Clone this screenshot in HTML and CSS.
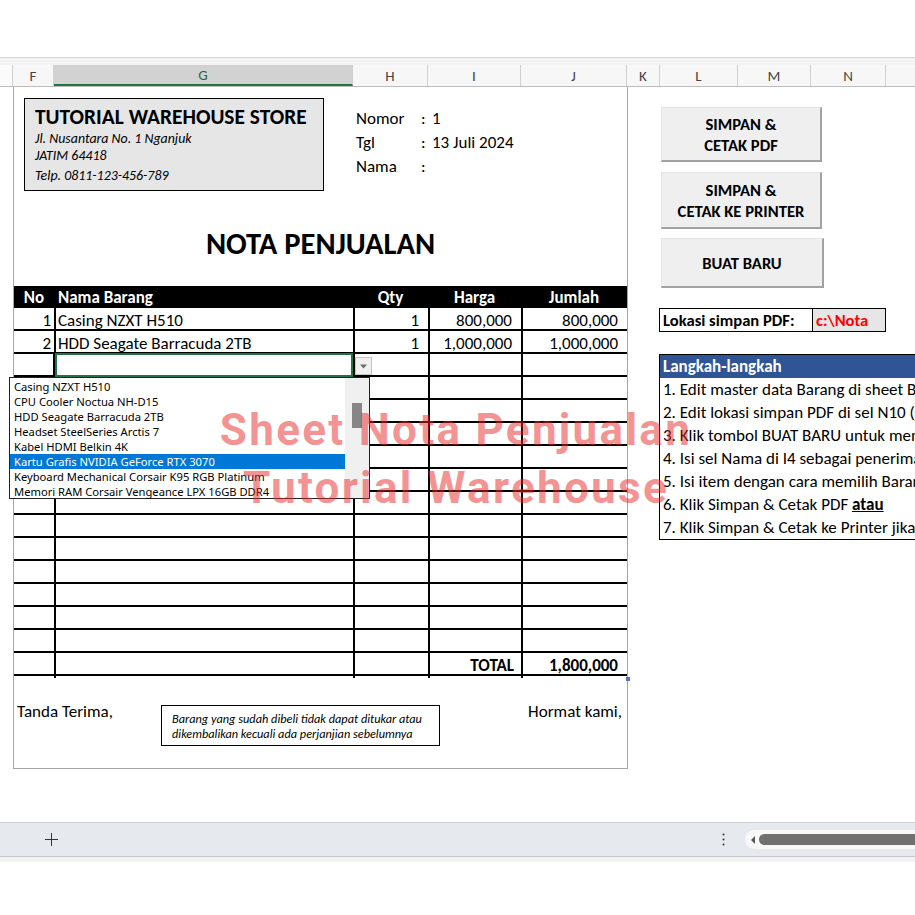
FILE: index.html
```html
<!DOCTYPE html>
<html lang="id">
<head>
<meta charset="utf-8">
<title>Nota Penjualan</title>
<link rel="stylesheet" href="styles.css">
</head>
<body>
<div class="app">
  <div class="topgap"></div>
  <div class="colhead">
    <div class="ch w-gut"></div>
    <div class="ch w-f">F</div>
    <div class="ch w-g sel">G</div>
    <div class="ch w-h">H</div>
    <div class="ch w-i">I</div>
    <div class="ch w-j">J</div>
    <div class="ch w-k">K</div>
    <div class="ch w-l">L</div>
    <div class="ch w-m">M</div>
    <div class="ch w-n">N</div>
    <div class="ch w-o"></div>
  </div>

  <div class="sheet">
    <div class="gutter"></div>
    <div class="invoice">
      <div class="head">
        <div class="store">
          <div class="store-name">TUTORIAL WAREHOUSE STORE</div>
          <div class="store-line">Jl. Nusantara No. 1 Nganjuk</div>
          <div class="store-line">JATIM 64418</div>
          <div class="store-line telp">Telp. 0811-123-456-789</div>
        </div>
        <div class="meta">
          <div>Nomor</div><div>:</div><div>1</div>
          <div>Tgl</div><div>:</div><div>13 Juli 2024</div>
          <div>Nama</div><div>:</div><div></div>
        </div>
      </div>
      <div class="title">NOTA PENJUALAN</div>
      <div class="tbl">
        <div class="tr th"><div>No</div><div class="left">Nama Barang</div><div>Qty</div><div>Harga</div><div>Jumlah</div></div>
        <div class="tr"><div>1</div><div>Casing NZXT H510</div><div class="num">1</div><div class="num">800,000</div><div class="num">800,000</div></div>
        <div class="tr"><div>2</div><div>HDD Seagate Barracuda 2TB</div><div class="num">1</div><div class="num">1,000,000</div><div class="num">1,000,000</div></div>
        <div class="tr"><div></div><div class="active"><span class="ddbtn"><svg width="9" height="5" viewBox="0 0 9 5"><path d="M1 0.5h7l-3.5 4z" fill="#6b6b6b"/></svg></span></div><div></div><div></div><div></div></div>
        <div class="tr"><div></div><div></div><div></div><div></div><div></div></div>
        <div class="tr"><div></div><div></div><div></div><div></div><div></div></div>
        <div class="tr"><div></div><div></div><div></div><div></div><div></div></div>
        <div class="tr"><div></div><div></div><div></div><div></div><div></div></div>
        <div class="tr"><div></div><div></div><div></div><div></div><div></div></div>
        <div class="tr"><div></div><div></div><div></div><div></div><div></div></div>
        <div class="tr"><div></div><div></div><div></div><div></div><div></div></div>
        <div class="tr"><div></div><div></div><div></div><div></div><div></div></div>
        <div class="tr"><div></div><div></div><div></div><div></div><div></div></div>
        <div class="tr"><div></div><div></div><div></div><div></div><div></div></div>
        <div class="tr"><div></div><div></div><div></div><div></div><div></div></div>
        <div class="tr"><div></div><div></div><div></div><div></div><div></div></div>
        <div class="tr total"><div></div><div></div><div></div><div class="num tot-l">TOTAL</div><div class="num">1,800,000<span class="handle"></span></div></div>
      </div>
      <div class="foot">
        <div class="tanda">Tanda Terima,</div>
        <div class="note">Barang yang sudah dibeli tidak dapat ditukar atau<br>dikembalikan kecuali ada perjanjian sebelumnya</div>
        <div class="hormat">Hormat kami,</div>
      </div>
    </div>

    <div class="panel">
      <div class="btn b1">SIMPAN &amp;<br>CETAK PDF</div>
      <div class="btn b2">SIMPAN &amp;<br>CETAK KE PRINTER</div>
      <div class="btn b3">BUAT BARU</div>
      <div class="lokasi"><div class="lok-label">Lokasi simpan PDF:</div><div class="lok-val">c:\Nota</div></div>
      <div class="steps">
        <div class="steps-head">Langkah-langkah</div>
        <div class="step">1. Edit master data Barang di sheet Barang</div>
        <div class="step">2. Edit lokasi simpan PDF di sel N10 (jika perlu)</div>
        <div class="step">3. Klik tombol BUAT BARU untuk membuat nota baru</div>
        <div class="step">4. Isi sel Nama di I4 sebagai penerima nota</div>
        <div class="step">5. Isi item dengan cara memilih Barang dari daftar</div>
        <div class="step">6. Klik Simpan &amp; Cetak PDF <b class="u">atau</b></div>
        <div class="step">7. Klik Simpan &amp; Cetak ke Printer jika ingin mencetak</div>
      </div>
    </div>
  </div>

  <div class="tabbar">
    <svg class="plus" width="13" height="13" viewBox="0 0 13 13"><path d="M6.5 0v13M0 6.5h13" stroke="#333" stroke-width="1"/></svg>
    <svg class="dots" width="3" height="13" viewBox="0 0 3 13"><circle cx="1.5" cy="1.5" r="1" fill="#333"/><circle cx="1.5" cy="6.5" r="1" fill="#333"/><circle cx="1.5" cy="11.5" r="1" fill="#333"/></svg>
    <div class="track"><span class="arrow"></span><span class="thumb"></span></div>
  </div>
  <div class="under"></div>

  <div class="dd">
    <div class="dd-items">
      <div class="dd-item">Casing NZXT H510</div>
      <div class="dd-item">CPU Cooler Noctua NH-D15</div>
      <div class="dd-item">HDD Seagate Barracuda 2TB</div>
      <div class="dd-item">Headset SteelSeries Arctis 7</div>
      <div class="dd-item">Kabel HDMI Belkin 4K</div>
      <div class="dd-item on">Kartu Grafis NVIDIA GeForce RTX 3070</div>
      <div class="dd-item">Keyboard Mechanical Corsair K95 RGB Platinum</div>
      <div class="dd-item">Memori RAM Corsair Vengeance LPX 16GB DDR4</div>
    </div>
    <div class="dd-scroll"><span class="dd-thumb"></span></div>
  </div>

  <div class="wm">Sheet Nota Penjualan<br>Tutorial Warehouse</div>
</div>
</body>
</html>
```

FILE: styles.css
```css
* { box-sizing: border-box; }
html, body { margin: 0; padding: 0; }
body {
  width: 915px; height: 915px; overflow: hidden; background: #fff; color: #000;
  font-family: Carlito, Calibri, Lato, "Noto Sans", sans-serif;
}
.app { position: relative; width: 915px; height: 915px; overflow: hidden; }
.topgap { height: 57px; }

/* column headers */
.colhead {
  height: 30px; display: flex; padding-top: 7px;
  background: #f3f3f3; border-top: 1px solid #d6d6d6; border-bottom: 1px solid #bdbdbd;
}
.ch {
  height: 21px; border-right: 1px solid #d0d0d0; background: #f7f7f7;
  display: flex; align-items: center; justify-content: center;
  font-size: 15px; color: #444; flex: none;
}
.w-gut { width: 13px; background: #fbfbfb; }
.w-f { width: 41px; }
.w-g { width: 299px; }
.w-h { width: 75px; }
.w-i { width: 93px; }
.w-j { width: 106px; }
.w-k { width: 33px; }
.w-l { width: 78px; }
.w-m { width: 73px; }
.w-n { width: 75px; }
.w-o { flex: 1; border-right: none; }
.ch.sel { background: #d2d2d2; color: #1e6b40; border-bottom: 2px solid #217346; }

/* sheet */
.sheet { display: flex; height: 735px; }
.gutter { width: 13px; flex: none; }
.invoice {
  width: 615px; height: 682px; flex: none; position: relative;
  border-left: 1px solid #a6a6a6; border-right: 1px solid #a6a6a6; border-bottom: 1px solid #a6a6a6;
}
.head { display: flex; height: 104px; padding: 11px 0 0 10px; }
.store {
  width: 300px; height: 93px; background: #e7e6e6; border: 1px solid #000;
  padding: 5px 0 0 10px; flex: none;
}
.store-name { font-weight: 700; font-size: 21.4px; line-height: 26px; }
.store-line { font-style: italic; font-size: 13.9px; line-height: 17px; }
.store-line.telp { margin-top: 3px; }
.meta {
  margin: 9px 0 0 32px; display: grid; grid-template-columns: 65px 11px auto;
  font-size: 17px; line-height: 24px; align-content: start;
}
.title { height: 95px; padding-top: 35px; text-align: center; font-weight: 700; font-size: 30.6px; line-height: 36px; }

/* table */
.tr {
  display: grid; grid-template-columns: 40px 299px 75px 93px 106px;
  height: 23px; border-bottom: 2px solid #000; font-size: 17px; line-height: 25px;
}
.tr > div { border-left: 2px solid #000; padding: 0 9px 0 2px; white-space: nowrap; }
.tr > div:first-child { border-left: none; text-align: right; padding-right: 3px; }
.tr > .num { text-align: right; }
.tr > .tot-l { padding-right: 7px; }
.total { font-weight: 700; }
.th { height: 22px; background: #000; color: #fff; font-weight: 700; border-bottom: none; line-height: 24px; }
.th > div, .th > div:first-child { border-left: none; text-align: center; padding: 0; }
.th > .left { text-align: left; padding-left: 4px; }
.tr > .active { position: relative; box-shadow: inset 0 0 0 2px #217346; margin: -1px 0 -2px -1px; }
.ddbtn {
  position: absolute; right: -19px; top: 4px; width: 17px; height: 18px;
  background: #f0f0f0; border: 1px solid #c6c6c6;
  display: flex; align-items: center; justify-content: center;
}
.tr > div:last-child { position: relative; }
.handle { position: absolute; right: -3px; bottom: -3px; width: 4px; height: 4px; background: #5b73b8; }

/* footer */
.foot { display: flex; align-items: flex-start; padding: 26px 5px 0 3px; font-size: 17px; line-height: 20px; }
.tanda { width: 144px; flex: none; }
.note {
  margin-top: 3px; width: 279px; height: 41px; border: 1px solid #000; flex: none;
  font-style: italic; font-size: 12.3px; line-height: 15px; padding: 5px 0 0 10px;
}
.hormat { margin-left: auto; }

/* right panel */
.panel { flex: 1; overflow: hidden; padding: 20px 0 0 31px; }
.btn {
  margin-left: 2px; width: 161px; background: #efefef;
  border-top: 1px solid #e4e4e4; border-left: 1px solid #e4e4e4;
  border-right: 2px solid #a2a2a2; border-bottom: 2px solid #a2a2a2;
  display: flex; align-items: center; justify-content: center; text-align: center;
  font-weight: 700; font-size: 16.6px; line-height: 21px; padding-top: 2px;
}
.b1 { height: 55px; }
.b2 { height: 57px; margin-top: 10px; }
.b3 { height: 50px; margin-top: 9px; width: 163px; }
.lokasi { margin-top: 20px; display: flex; width: 227px; height: 24px; border: 1px solid #000; font-weight: 700; font-size: 16.6px; line-height: 22px; }
.lok-label { width: 153px; border-right: 1px solid #000; padding-left: 3px; background: #fff; }
.lok-val { flex: 1; background: #e7e6e6; color: #f00; padding-left: 3px; }
.steps { margin-top: 22px; width: 420px; border: 1px solid #000; font-size: 17px; }
.steps-head { height: 23px; background: #2f5597; color: #fff; font-weight: 700; line-height: 23px; padding-left: 3px; }
.step { height: 23px; line-height: 23px; padding-left: 3px; white-space: nowrap; }
.u { text-decoration: underline; }

/* tab bar */
.tabbar {
  height: 35px; display: flex; align-items: center; overflow: hidden;
  background: #e6e9ee; border-top: 1px solid #d0d3d8; border-bottom: 1px solid #c4c6c9;
}
.plus { margin-left: 45px; flex: none; }
.dots { margin-left: auto; flex: none; }
.track {
  margin-left: 20px; margin-right: -12px; width: 182px; height: 19px; flex: none;
  background: #f8f8f8; border-radius: 10px; display: flex; align-items: center; padding-left: 6px;
}
.arrow { width: 0; height: 0; border-top: 4px solid transparent; border-bottom: 4px solid transparent; border-right: 4px solid #555; }
.thumb { flex: 1; height: 11px; margin-left: 4px; background: #707070; border-radius: 6px; }
.under { height: 5px; background: #f3f3f3; }

/* dropdown list */
.dd {
  position: absolute; left: 9px; top: 377px; width: 361px; height: 122px;
  background: #fff; border: 1px solid #222; display: flex;
}
.dd-items { width: 335px; padding-top: 1px; }
.dd-item {
  height: 15px; line-height: 15px; padding-left: 4px; white-space: nowrap;
  font-family: "Noto Sans", "Open Sans", sans-serif; font-size: 11.2px; color: #000;
}
.dd-item.on { background: #0078d7; color: #fff; }
.dd-scroll { flex: 1; background: #f0f0f0; position: relative; }
.dd-thumb { position: absolute; left: 7px; top: 25px; width: 10px; height: 25px; background: #868686; }

/* watermark */
.wm {
  position: absolute; left: 0; top: 401px; width: 912px; text-align: center;
  font-family: Roboto, "Noto Sans", sans-serif; font-weight: 700; font-size: 44px; line-height: 58px;
  letter-spacing: 2.3px; color: rgba(232, 40, 40, 0.5); pointer-events: none;
}
```
